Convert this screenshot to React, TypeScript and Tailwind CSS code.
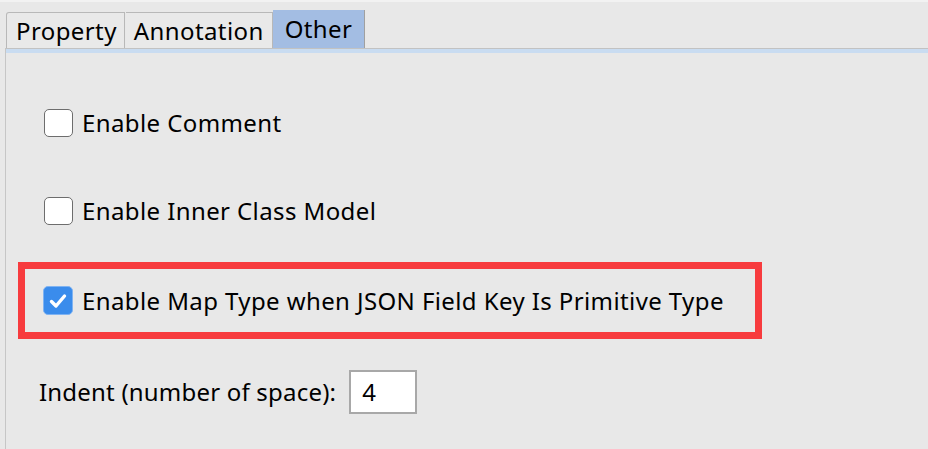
import React from 'react';

const font = { fontFamily: '"Noto Sans", "Open Sans", sans-serif' };

const Box: React.FC<{ checked?: boolean }> = ({ checked }) =>
    checked ? (
        <div className="w-[30px] h-[29px] rounded-[5px] bg-[#3a8cec] border border-[#7fb3f2] flex items-center justify-center shrink-0">
            <svg width="20" height="18" viewBox="0 0 20 18" fill="none">
                <path d="M3.5 9.5 L8 14 L16.5 4" stroke="white" strokeWidth="3.4" strokeLinecap="round" strokeLinejoin="round" />
            </svg>
        </div>
    ) : (
        <div className="w-[29px] h-[28px] rounded-[5px] bg-white border border-[#6d6d6d] shrink-0" />
    );

const Row: React.FC<{ label: string; checked?: boolean }> = ({ label, checked }) => (
    <div className="flex items-center gap-[9px]">
        <Box checked={checked} />
        <span className="text-[24px] tracking-[0.4px] text-black leading-none">{label}</span>
    </div>
);

export default function App() {
    return (
        <div style={font} className="w-full h-[449px] bg-[#e8e8e8] overflow-hidden flex flex-col">
            <div className="h-[2px] bg-[#f2f2f2]" />

            {/* tabs */}
            <div className="flex items-end pl-[6px] h-[46px] text-[24px] tracking-[0.4px] text-black leading-none">
                <div className="h-[36px] pl-[9px] pr-[7px] flex items-center border border-b-0 border-[#b8b8b8] rounded-tl-[3px] bg-[#e9e9e9]">
                    Property
                </div>
                <div className="h-[36px] px-[8px] ml-[1px] flex items-center border border-b-0 border-l-0 border-[#b8b8b8] bg-[#e9e9e9]">
                    Annotation
                </div>
                <div className="h-[38px] px-[12px] flex items-center bg-[#a3bde3] border-r border-[#a0a0a0]">
                    Other
                </div>
            </div>

            {/* panel */}
            <div className="flex-1 ml-[5px] border-l border-[#c6c6c6] border-t border-t-[#c2c2c2] flex flex-col">
                <div className="h-[4px] bg-[#c9dcf1]" />

                <div className="ml-[38px] mt-[56px]">
                    <Row label="Enable Comment" />
                </div>
                <div className="ml-[38px] mt-[60px]">
                    <Row label="Enable Inner Class Model" />
                </div>

                <div className="ml-[12px] mt-[37px] w-[744px] h-[77px] border-[7px] border-[#f73b3e] flex items-center pl-[18px]">
                    <Row label="Enable Map Type when JSON Field Key Is Primitive Type" checked />
                </div>

                <div className="ml-[33px] mt-[31px] flex items-center gap-[13px]">
                    <span className="text-[24px] tracking-[0.2px] text-black leading-none">Indent (number of space):</span>
                    <div className="w-[68px] h-[44px] bg-white border-2 border-[#a8a8a8] flex items-center pl-[11px] text-[24px] leading-none">
                        4
                    </div>
                </div>
            </div>
        </div>
    );
}
